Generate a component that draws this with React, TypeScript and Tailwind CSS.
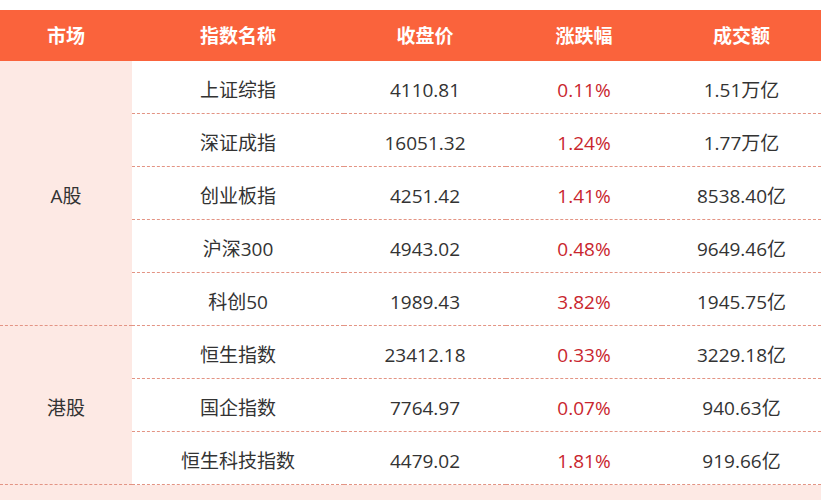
import React from "react";

const groups = [
  {
    market: "A股",
    rows: [
      ["上证综指", "4110.81", "0.11%", "1.51万亿"],
      ["深证成指", "16051.32", "1.24%", "1.77万亿"],
      ["创业板指", "4251.42", "1.41%", "8538.40亿"],
      ["沪深300", "4943.02", "0.48%", "9649.46亿"],
      ["科创50", "1989.43", "3.82%", "1945.75亿"],
    ],
  },
  {
    market: "港股",
    rows: [
      ["恒生指数", "23412.18", "0.33%", "3229.18亿"],
      ["国企指数", "7764.97", "0.07%", "940.63亿"],
      ["恒生科技指数", "4479.02", "1.81%", "919.66亿"],
    ],
  },
];

const font = { fontFamily: '"Open Sans", "Noto Sans CJK SC", sans-serif' };

export default function App() {
  return (
    <div className="w-[821px] h-[500px] bg-white overflow-hidden pt-[10px]" style={font}>
      <div className="grid grid-cols-[132px_212px_162px_156px_159px]">
        {["市场", "指数名称", "收盘价", "涨跌幅", "成交额"].map((h) => (
          <div
            key={h}
            className="h-[51px] bg-[#fa633c] text-white font-bold text-[19px] flex items-center justify-center pt-[1px]"
          >
            {h}
          </div>
        ))}
        {groups.map((g) => (
          <React.Fragment key={g.market}>
            <div
              className={`bg-[#fde9e4] text-[#333] text-[19px] flex items-center justify-center pt-[6px] border-b border-dashed border-[#e39484] ${
                g.rows.length === 5 ? "row-span-5" : "row-span-3"
              }`}
            >
              {g.market}
            </div>
            {g.rows.map((r) => (
              <React.Fragment key={r[0]}>
                {r.map((c, j) => (
                  <div
                    key={j}
                    className={`h-[53px] pt-[6px] border-b border-dashed border-[#e39484] flex items-center justify-center text-[19px] ${
                      j === 2 ? "text-[#c9262e]" : "text-[#333]"
                    }`}
                    style={{ gridColumn: j + 2 }}
                  >
                    {c}
                  </div>
                ))}
              </React.Fragment>
            ))}
          </React.Fragment>
        ))}
      </div>
      <div className="h-[40px] bg-[#fde9e4]" />
    </div>
  );
}
